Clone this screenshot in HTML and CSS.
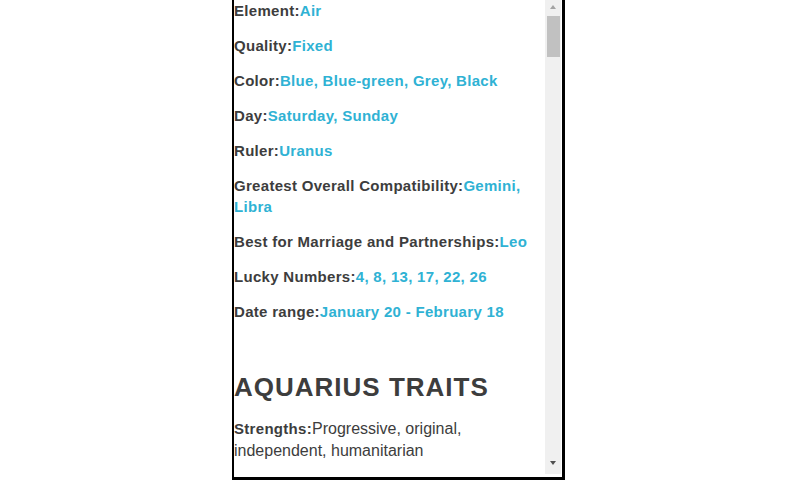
FILE: index.html
```html
<!DOCTYPE html>
<html>
<head>
<meta charset="utf-8">
<link rel="stylesheet" href="styles.css">
</head>
<body>
<div class="frame">
  <div class="content">
    <p class="fact"><b>Element:</b><span class="val">Air</span></p>
    <p class="fact"><b>Quality:</b><span class="val">Fixed</span></p>
    <p class="fact"><b>Color:</b><span class="val">Blue, Blue-green, Grey, Black</span></p>
    <p class="fact"><b>Day:</b><span class="val">Saturday, Sunday</span></p>
    <p class="fact"><b>Ruler:</b><span class="val">Uranus</span></p>
    <p class="fact"><b>Greatest Overall Compatibility:</b><span class="val">Gemini, Libra</span></p>
    <p class="fact"><b>Best for Marriage and Partnerships:</b><span class="val">Leo</span></p>
    <p class="fact"><b>Lucky Numbers:</b><span class="val">4, 8, 13, 17, 22, 26</span></p>
    <p class="fact"><b>Date range:</b><span class="val">January 20 - February 18</span></p>
    <h2 class="title">AQUARIUS TRAITS</h2>
    <p class="trait"><b>Strengths:</b>Progressive, original, independent, humanitarian</p>
  </div>
  <div class="scrollbar">
    <div class="arrow up"></div>
    <div class="track"><div class="thumb"></div></div>
    <div class="arrow down"></div>
  </div>
</div>
</body>
</html>
```
FILE: styles.css
```css
html, body {
  margin: 0;
  padding: 0;
  background: #fff;
}
body {
  font-family: "Liberation Sans", Arial, sans-serif;
  color: #3d3d3d;
}
.frame {
  margin-left: 232px;
  width: 328px;
  height: 477px;
  border-left: 2px solid #000;
  border-right: 3px solid #000;
  border-bottom: 3px solid #000;
  display: flex;
  overflow: hidden;
}
.content {
  width: 311px;
  flex: none;
  overflow: hidden;
}
.fact {
  margin: 0 0 14px;
  font-size: 15px;
  line-height: 21px;
  font-weight: bold;
  letter-spacing: 0.3px;
}
.fact b {
  color: #3d3d3d;
}
.val {
  color: #2fb2d4;
}
.title {
  margin: 49px 0 15px;
  font-size: 26px;
  line-height: 32px;
  font-weight: bold;
  letter-spacing: 1px;
  color: #3d3d3d;
}
.trait {
  margin: 0;
  font-size: 16px;
  line-height: 22px;
}
.trait b {
  font-size: 15px;
  letter-spacing: 0.3px;
}
.scrollbar {
  width: 16px;
  height: 474px;
  background: #f0f0f0;
  display: flex;
  flex-direction: column;
  align-items: center;
  flex: none;
}
.arrow {
  width: 0;
  height: 0;
  border-left: 3.5px solid transparent;
  border-right: 3.5px solid transparent;
  flex: none;
}
.arrow.up {
  margin-top: 5px;
  border-bottom: 4px solid #a3a3a3;
}
.arrow.down {
  margin-bottom: 9px;
  border-top: 4px solid #505050;
}
.track {
  flex: 1;
  width: 100%;
  display: flex;
  justify-content: center;
}
.thumb {
  margin-top: 7px;
  width: 13px;
  height: 41px;
  background: #c1c1c1;
}
```
